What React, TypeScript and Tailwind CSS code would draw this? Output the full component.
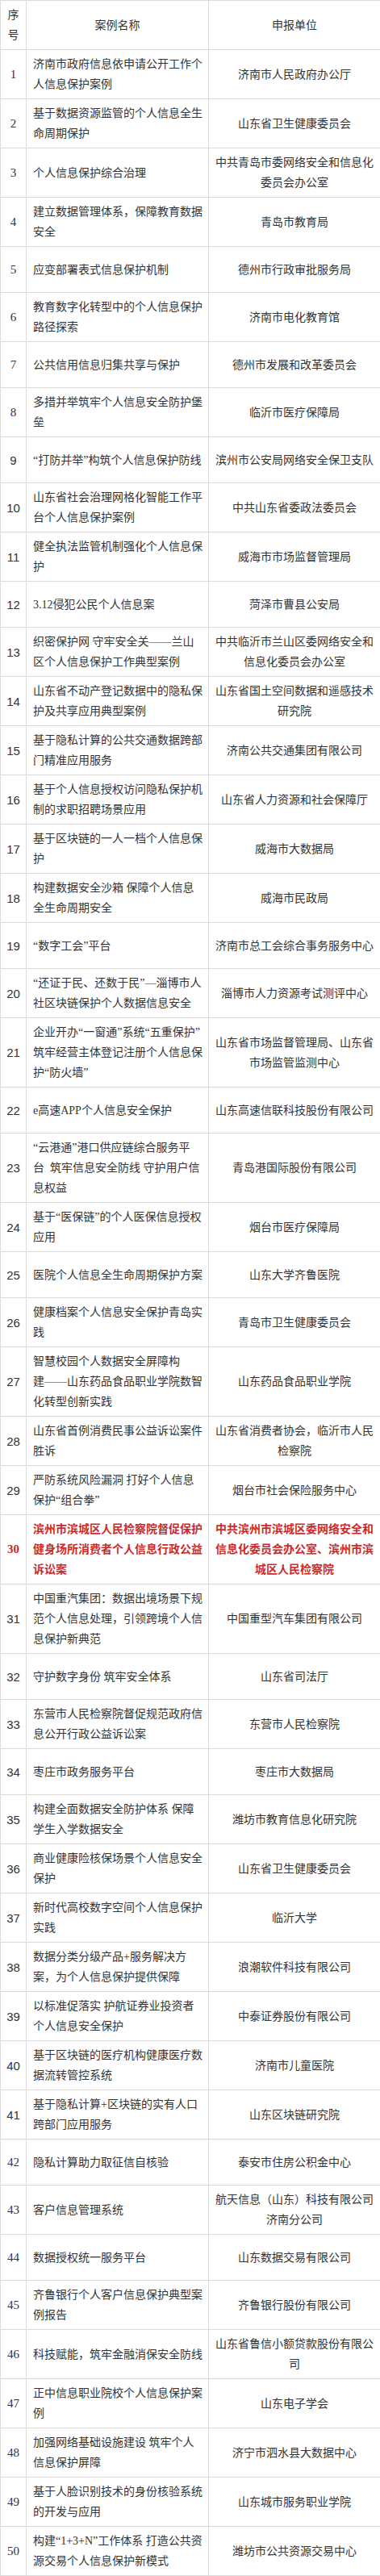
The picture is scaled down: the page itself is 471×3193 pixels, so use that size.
import React from "react";

type Row = {
  no: string;
  name: string[];
  unit: string[];
  serif?: boolean;
  hot?: boolean;
};

const rows: Row[] = [
  { no: "1", name: ["济南市政府信息依申请公开工作个", "人信息保护案例"], unit: ["济南市人民政府办公厅"], serif: true },
  { no: "2", name: ["基于数据资源监管的个人信息全生", "命周期保护"], unit: ["山东省卫生健康委员会"], serif: true },
  { no: "3", name: ["个人信息保护综合治理"], unit: ["中共青岛市委网络安全和信息化", "委员会办公室"], serif: true },
  { no: "4", name: ["建立数据管理体系，保障教育数据", "安全"], unit: ["青岛市教育局"], serif: true },
  { no: "5", name: ["应变部署表式信息保护机制"], unit: ["德州市行政审批服务局"], serif: true },
  { no: "6", name: ["教育数字化转型中的个人信息保护", "路径探索"], unit: ["济南市电化教育馆"], serif: true },
  { no: "7", name: ["公共信用信息归集共享与保护"], unit: ["德州市发展和改革委员会"], serif: true },
  { no: "8", name: ["多措并举筑牢个人信息安全防护堡", "垒"], unit: ["临沂市医疗保障局"], serif: true },
  { no: "9", name: ["“打防并举”构筑个人信息保护防线"], unit: ["滨州市公安局网络安全保卫支队"] },
  { no: "10", name: ["山东省社会治理网格化智能工作平", "台个人信息保护案例"], unit: ["中共山东省委政法委员会"] },
  { no: "11", name: ["健全执法监管机制强化个人信息保", "护"], unit: ["威海市市场监督管理局"] },
  { no: "12", name: ["3.12侵犯公民个人信息案"], unit: ["菏泽市曹县公安局"] },
  { no: "13", name: ["织密保护网 守牢安全关——兰山", "区个人信息保护工作典型案例"], unit: ["中共临沂市兰山区委网络安全和", "信息化委员会办公室"] },
  { no: "14", name: ["山东省不动产登记数据中的隐私保", "护及共享应用典型案例"], unit: ["山东省国土空间数据和遥感技术", "研究院"] },
  { no: "15", name: ["基于隐私计算的公共交通数据跨部", "门精准应用服务"], unit: ["济南公共交通集团有限公司"] },
  { no: "16", name: ["基于个人信息授权访问隐私保护机", "制的求职招聘场景应用"], unit: ["山东省人力资源和社会保障厅"] },
  { no: "17", name: ["基于区块链的一人一档个人信息保", "护"], unit: ["威海市大数据局"] },
  { no: "18", name: ["构建数据安全沙箱 保障个人信息", "全生命周期安全"], unit: ["威海市民政局"] },
  { no: "19", name: ["“数字工会”平台"], unit: ["济南市总工会综合事务服务中心"] },
  { no: "20", name: ["“还证于民、还数于民”—淄博市人", "社区块链保护个人数据信息安全"], unit: ["淄博市人力资源考试测评中心"] },
  { no: "21", name: ["企业开办“一窗通”系统“五重保护”", "筑牢经营主体登记注册个人信息保", "护“防火墙”"], unit: ["山东省市场监督管理局、山东省", "市场监管监测中心"] },
  { no: "22", name: ["e高速APP个人信息安全保护"], unit: ["山东高速信联科技股份有限公司"] },
  { no: "23", name: ["“云港通”港口供应链综合服务平", "台  筑牢信息安全防线 守护用户信", "息权益"], unit: ["青岛港国际股份有限公司"] },
  { no: "24", name: ["基于“医保链”的个人医保信息授权", "应用"], unit: ["烟台市医疗保障局"] },
  { no: "25", name: ["医院个人信息全生命周期保护方案"], unit: ["山东大学齐鲁医院"] },
  { no: "26", name: ["健康档案个人信息安全保护青岛实", "践"], unit: ["青岛市卫生健康委员会"] },
  { no: "27", name: ["智慧校园个人数据安全屏障构", "建——山东药品食品职业学院数智", "化转型创新实践"], unit: ["山东药品食品职业学院"] },
  { no: "28", name: ["山东省首例消费民事公益诉讼案件", "胜诉"], unit: ["山东省消费者协会，临沂市人民", "检察院"] },
  { no: "29", name: ["严防系统风险漏洞 打好个人信息", "保护“组合拳”"], unit: ["烟台市社会保险服务中心"] },
  { no: "30", name: ["滨州市滨城区人民检察院督促保护", "健身场所消费者个人信息行政公益", "诉讼案"], unit: ["中共滨州市滨城区委网络安全和", "信息化委员会办公室、滨州市滨", "城区人民检察院"], serif: true, hot: true },
  { no: "31", name: ["中国重汽集团：数据出境场景下规", "范个人信息处理，引领跨境个人信", "息保护新典范"], unit: ["中国重型汽车集团有限公司"] },
  { no: "32", name: ["守护数字身份 筑牢安全体系"], unit: ["山东省司法厅"] },
  { no: "33", name: ["东营市人民检察院督促规范政府信", "息公开行政公益诉讼案"], unit: ["东营市人民检察院"] },
  { no: "34", name: ["枣庄市政务服务平台"], unit: ["枣庄市大数据局"] },
  { no: "35", name: ["构建全面数据安全防护体系 保障", "学生入学数据安全"], unit: ["潍坊市教育信息化研究院"] },
  { no: "36", name: ["商业健康险核保场景个人信息安全", "保护"], unit: ["山东省卫生健康委员会"] },
  { no: "37", name: ["新时代高校数字空间个人信息保护", "实践"], unit: ["临沂大学"] },
  { no: "38", name: ["数据分类分级产品+服务解决方", "案，为个人信息保护提供保障"], unit: ["浪潮软件科技有限公司"] },
  { no: "39", name: ["以标准促落实 护航证券业投资者", "个人信息安全保护"], unit: ["中泰证券股份有限公司"] },
  { no: "40", name: ["基于区块链的医疗机构健康医疗数", "据流转管控系统"], unit: ["济南市儿童医院"] },
  { no: "41", name: ["基于隐私计算+区块链的实有人口", "跨部门应用服务"], unit: ["山东区块链研究院"] },
  { no: "42", name: ["隐私计算助力取征信自核验"], unit: ["泰安市住房公积金中心"], serif: true },
  { no: "43", name: ["客户信息管理系统"], unit: ["航天信息（山东）科技有限公司", "济南分公司"], serif: true },
  { no: "44", name: ["数据授权统一服务平台"], unit: ["山东数据交易有限公司"], serif: true },
  { no: "45", name: ["齐鲁银行个人客户信息保护典型案", "例报告"], unit: ["齐鲁银行股份有限公司"], serif: true },
  { no: "46", name: ["科技赋能，筑牢金融消保安全防线"], unit: ["山东省鲁信小额贷款股份有限公", "司"], serif: true },
  { no: "47", name: ["正中信息职业院校个人信息保护案", "例"], unit: ["山东电子学会"], serif: true },
  { no: "48", name: ["加强网络基础设施建设 筑牢个人", "信息保护屏障"], unit: ["济宁市泗水县大数据中心"], serif: true },
  { no: "49", name: ["基于人脸识别技术的身份核验系统", "的开发与应用"], unit: ["山东城市服务职业学院"], serif: true },
  { no: "50", name: ["构建“1+3+N”工作体系 打造公共资", "源交易个人信息保护新模式"], unit: ["潍坊市公共资源交易中心"], serif: true },
];

const cell = "border border-[#dcdcdc] align-middle py-[5px] h-[57px]";

function Lines({ lines }: { lines: string[] }) {
  return (
    <>
      {lines.map((l, i) => (
        <div key={i} className="whitespace-pre">
          {l}
        </div>
      ))}
    </>
  );
}

export default function App() {
  return (
    <div className="w-[471px] bg-white text-[#333] font-['Liberation_Serif','Noto_Sans_CJK_SC',sans-serif] text-[14px] leading-[25px]">
      <table className="w-[471px] table-fixed border-collapse">
        <colgroup>
          <col className="w-[32px]" />
          <col className="w-[226px]" />
          <col className="w-[213px]" />
        </colgroup>
        <thead>
          <tr>
            <th className={`${cell} px-0 text-center font-normal`}>
              <div>序</div>
              <div>号</div>
            </th>
            <th className={`${cell} px-2 text-center font-normal`}>案例名称</th>
            <th className={`${cell} px-2 text-center font-normal`}>申报单位</th>
          </tr>
        </thead>
        <tbody>
          {rows.map((r) => (
            <tr key={r.no} className={r.hot ? "text-[#cc2b2b] font-bold" : ""}>
              <td
                className={`${cell} px-0 text-center text-[15px] ${
                  r.serif ? "font-['Liberation_Serif',serif]" : "font-['Liberation_Sans',sans-serif]"
                }`}
              >
                {r.no}
              </td>
              <td className={`${cell} pl-[8px] pr-[6px] text-left`}>
                <Lines lines={r.name} />
              </td>
              <td className={`${cell} px-[6px] text-center`}>
                <Lines lines={r.unit} />
              </td>
            </tr>
          ))}
        </tbody>
      </table>
    </div>
  );
}
